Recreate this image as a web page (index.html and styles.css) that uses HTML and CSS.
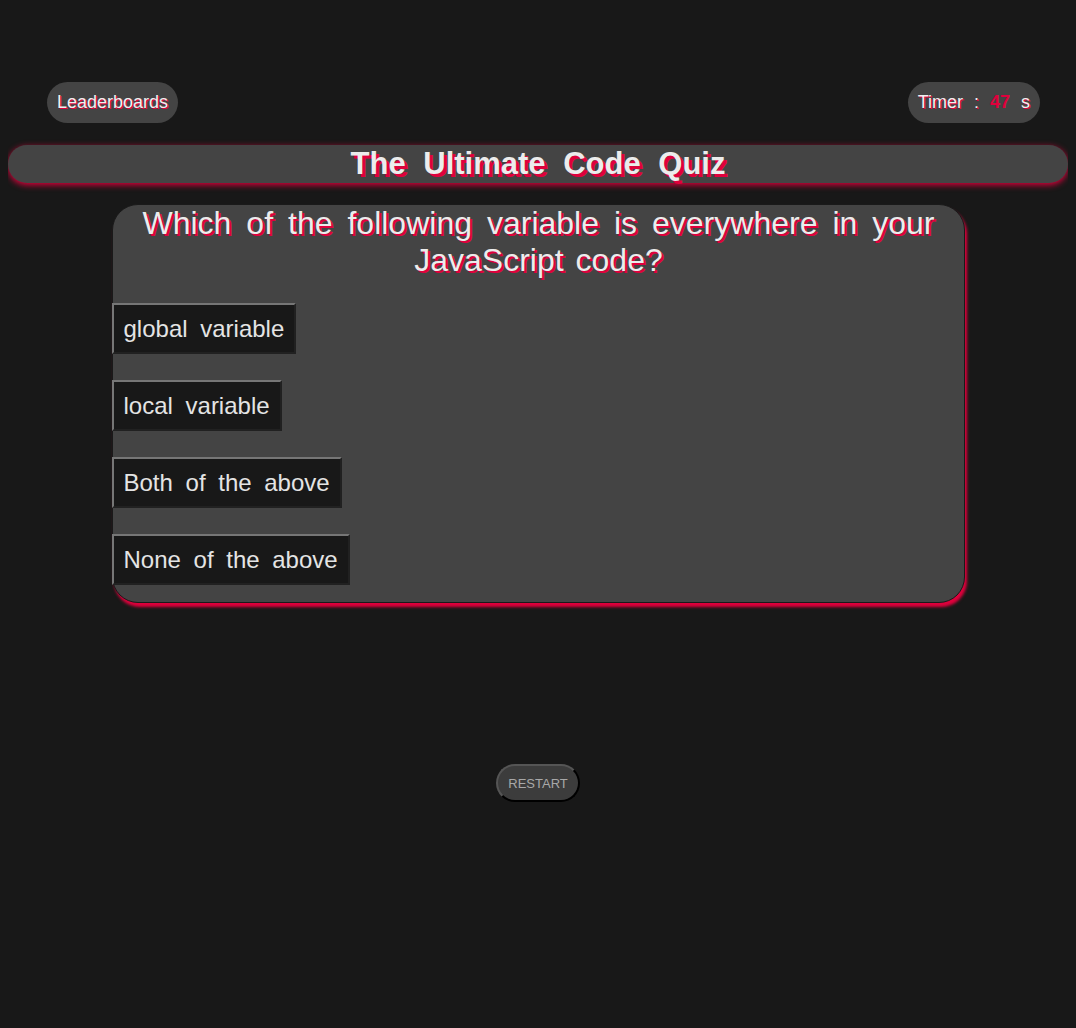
FILE: index.html
```html
<!DOCTYPE html>
<html>
<head>
<meta charset="utf-8">
<link rel="stylesheet" href="styles.css">
</head>
<body>
<header class="top">
  <a class="pill leader">Leaderboards</a>
  <div class="pill timer">Timer : <span class="secs">47</span> s</div>
</header>
<h1 class="title">The Ultimate Code Quiz</h1>
<section class="card">
  <h2 class="question">Which of the following variable is everywhere in your JavaScript code?</h2>
  <div class="answers">
    <button class="answer">global variable</button>
    <button class="answer">local variable</button>
    <button class="answer">Both of the above</button>
    <button class="answer">None of the above</button>
  </div>
</section>
<div class="restart-row">
  <button class="restart">RESTART</button>
</div>
</body>
</html>
```
FILE: styles.css
```css
html, body {
  background: #181818;
}
body {
  margin: 8px;
  font-family: "Liberation Sans", Arial, sans-serif;
  color: #e6e6e6;
  word-spacing: 6px;
}
.top {
  display: flex;
  justify-content: space-between;
  align-items: center;
  margin-top: 74px;
  padding: 0 28px 0 39px;
}
.pill {
  background: #444;
  border-radius: 21px;
  height: 41px;
  box-sizing: border-box;
  padding: 0 10px;
  display: flex;
  align-items: center;
  font-size: 18px;
  color: #f0f0f0;
  text-shadow: 1px 1px 0 #e0003c;
  word-spacing: 6px;
  white-space: pre;
}
.secs {
  color: #e0003c;
  font-weight: bold;
  text-shadow: none;
}
.title {
  margin: 22px 0 0;
  background: #444;
  border-radius: 19px;
  height: 38px;
  line-height: 38px;
  text-align: center;
  font-size: 31px;
  font-weight: bold;
  color: #ececec;
  text-shadow: 3px 3px 0 #e0003c;
  box-shadow: 0 2px 6px #e0003c;
  word-spacing: 9px;
}
.card {
  width: 853px;
  box-sizing: border-box;
  margin: 21px auto 0;
  background: #444;
  border: 1px solid #1a1a1a;
  border-radius: 26px;
  box-shadow: 2px 4px 3px #e0003c;
  padding: 0 0 17px;
}
.question {
  margin: 0;
  padding: 0 29px 0 30px;
  font-size: 32px;
  font-weight: normal;
  line-height: 37px;
  text-align: justify;
  text-align-last: center;
  color: #ececec;
  text-shadow: 2px 2px 0 #e0003c;
  word-spacing: 3px;
}
.answers {
  display: flex;
  flex-direction: column;
  align-items: flex-start;
  gap: 26px;
  margin: 24px 0 0 -1px;
}
.answer {
  font-family: "Liberation Sans", Arial, sans-serif;
  font-size: 24px;
  color: #e4e4e4;
  background: #181818;
  border: 2px outset #767676;
  padding: 0 10px;
  height: 51px;
  word-spacing: 6px;
}
.restart-row {
  display: flex;
  justify-content: center;
  margin-top: 161px;
}
.restart {
  font-family: "Liberation Sans", Arial, sans-serif;
  font-size: 13px;
  color: #a8a8a8;
  background: #3c3c3c;
  border: 2px outset #555;
  border-radius: 19px;
  height: 38px;
  padding: 0 10px;
  word-spacing: 0;
}
```
